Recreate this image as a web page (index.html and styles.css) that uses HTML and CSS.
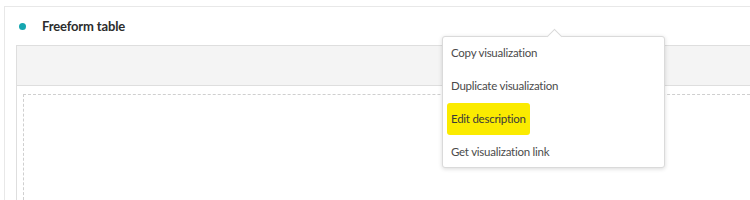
FILE: index.html
```html
<!DOCTYPE html>
<html lang="en">
<head>
  <meta charset="UTF-8" />
  <title>Freeform table</title>
  <link rel="stylesheet" href="styles.css">
</head>
<body>
  <div class="panel">
    <div class="panel-head">
      <span class="dot"></span>
      <h2>Freeform table</h2>
    </div>
    <div class="viz">
      <div class="viz-bar"></div>
      <div class="viz-body">
        <div class="drop-zone"></div>
      </div>
    </div>
  </div>

  <div class="menu">
    <div class="menu-item">Copy visualization</div>
    <div class="menu-item">Duplicate visualization</div>
    <div class="menu-item"><span class="marked">Edit description</span></div>
    <div class="menu-item">Get visualization link</div>
  </div>
</body>
</html>
```

FILE: styles.css
```css
body {
  margin: 0;
  background: #fff;
  font-family: Lato, 'Open Sans', sans-serif;
  font-variant-ligatures: none;
  color: #4b4b4b;
  overflow: hidden;
}

.panel {
  margin: 6px 0 0 4px;
  height: 193px;
  border-left: 1px solid #e8e8e8;
  border-top: 1px solid #e8e8e8;
  padding-left: 11px;
}

.panel-head {
  display: flex;
  align-items: center;
  height: 38px;
  padding-left: 3px;
}

.dot {
  width: 7px;
  height: 7px;
  border-radius: 50%;
  background: #15a6b0;
  margin-right: 16px;
}

.panel-head h2 {
  margin: 0;
  font-size: 13px;
  font-weight: bold;
  letter-spacing: -0.15px;
  color: #2c2c2c;
}

.viz {
  border: 1px solid #dedede;
  border-right: none;
  border-bottom: none;
  height: 154px;
}

.viz-bar {
  height: 39px;
  background: #f4f4f4;
  border-bottom: 1px solid #dedede;
}

.viz-body {
  padding: 8px 0 0 6px;
}

.drop-zone {
  height: 105px;
  border: 1px dashed #cfcfcf;
  border-right: none;
  border-bottom: none;
}

.menu {
  position: absolute;
  left: 442px;
  top: 36px;
  width: 221px;
  height: 130px;
  background: #fff;
  border: 1px solid #dadada;
  border-radius: 3px;
  box-shadow: 0 1px 4px rgba(0, 0, 0, 0.15);
}

.menu::before {
  content: "";
  position: absolute;
  left: 106px;
  top: -6px;
  width: 10px;
  height: 10px;
  background: #fff;
  border-left: 1px solid #dadada;
  border-top: 1px solid #dadada;
  transform: rotate(45deg);
}

.menu-item {
  height: 33px;
  line-height: 32px;
  padding-left: 8px;
  font-size: 11.5px;
  letter-spacing: -0.25px;
}

.marked {
  display: inline-block;
  height: 32px;
  margin-left: -4px;
  padding: 0 4px;
  background: #fbeb00;
  border-radius: 3px;
  color: #3a3a3a;
}
```
